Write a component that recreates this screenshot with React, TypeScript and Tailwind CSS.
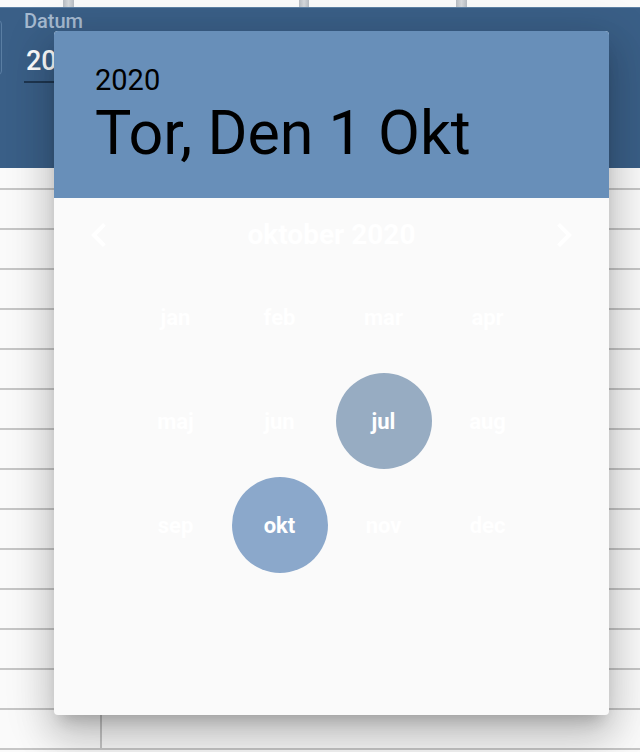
import React from 'react';

const months = ['jan', 'feb', 'mar', 'apr', 'maj', 'jun', 'jul', 'aug', 'sep', 'okt', 'nov', 'dec'];

function Chevron({ dir }: { dir: 'left' | 'right' }) {
  const d =
    dir === 'left'
      ? 'M15.41,16.58L10.83,12L15.41,7.41L14,6L8,12L14,18L15.41,16.58Z'
      : 'M8.59,16.58L13.17,12L8.59,7.41L10,6L16,12L10,18L8.59,16.58Z';
  return (
    <svg viewBox="0 0 24 24" className="w-[48px] h-[48px]" fill="#ffffff">
      <path d={d} />
    </svg>
  );
}

export default function App() {
  return (
    <div className="relative w-[640px] h-[752px] overflow-hidden bg-[#fafafa] font-['Roboto',sans-serif]">
      {/* top strip */}
      <div className="relative h-[7px] bg-[#fafafa]">
        <div className="absolute left-[63px] top-0 w-[11px] h-full bg-gradient-to-r from-[#b7bcc2] via-[#d6d9dc] to-[#b7bcc2]" />
        <div className="absolute left-[299px] top-0 w-[10px] h-full bg-gradient-to-r from-[#b7bcc2] via-[#d6d9dc] to-[#b7bcc2]" />
        <div className="absolute left-[456px] top-0 w-[11px] h-full bg-gradient-to-r from-[#b7bcc2] via-[#d6d9dc] to-[#b7bcc2]" />
      </div>
      <div className="h-[1px] bg-[#5d80a4]" />

      {/* toolbar */}
      <div className="relative h-[160px] bg-[#3a5f87]">
        <div className="absolute -left-[10px] top-[12px] w-[12px] h-[55px] rounded-[4px] border border-[#5a7ea3]" />
        <div className="pl-[24px] pt-[2px]">
          <div className="text-[20px] leading-[22px] font-medium text-[#a6bad0]">Datum</div>
          <div className="mt-[13px] w-[32px] pl-[2px] text-[27px] leading-[32px] font-medium text-white border-b-2 border-[#1e3650] pb-[4px]">
            2020
          </div>
        </div>
      </div>

      {/* table rows */}
      <div>
        <div className="h-[22px] border-b-2 border-[#c6c6c6]" />
        {Array.from({ length: 14 }).map((_, i) => (
          <div key={i} className="flex h-[40px] border-b-2 border-[#c6c6c6]">
            <div className="w-[102px] border-r-2 border-[#c6c6c6]" />
          </div>
        ))}
      </div>

      {/* date picker dialog */}
      <div className="absolute left-[54px] top-[31px] w-[555px] h-[684px] rounded-[4px] overflow-hidden bg-[#fafafa] shadow-[0_11px_15px_-7px_rgba(0,0,0,0.2),0_24px_38px_3px_rgba(0,0,0,0.14),0_9px_46px_8px_rgba(0,0,0,0.12)]">
        <div className="h-[167px] bg-[#688fb9] px-[41px] pt-[35px] text-black">
          <div className="text-[29px] leading-[28px]">2020</div>
          <div className="mt-[9px] text-[61px] leading-[60px]">Tor, Den 1 Okt</div>
        </div>

        <div className="pt-[13px]">
          <div className="flex h-[48px] items-center justify-between px-[21px]">
            <Chevron dir="left" />
            <div className="text-[28px] font-bold text-white">oktober 2020</div>
            <Chevron dir="right" />
          </div>

          <div className="mt-[6px] mx-auto grid w-[416px] grid-cols-4">
            {months.map((m) => (
              <div key={m} className="flex h-[104px] items-center justify-center">
                <div
                  className={
                    m === 'jul'
                      ? 'flex h-[96px] w-[96px] items-center justify-center rounded-full bg-[#97acc2] text-[22px] font-bold text-white'
                      : m === 'okt'
                      ? 'flex h-[96px] w-[96px] items-center justify-center rounded-full bg-[#8ba8cb] text-[22px] font-bold text-white'
                      : 'flex h-[96px] w-[96px] items-center justify-center text-[22px] font-bold text-white'
                  }
                >
                  {m}
                </div>
              </div>
            ))}
          </div>
        </div>
      </div>
    </div>
  );
}
